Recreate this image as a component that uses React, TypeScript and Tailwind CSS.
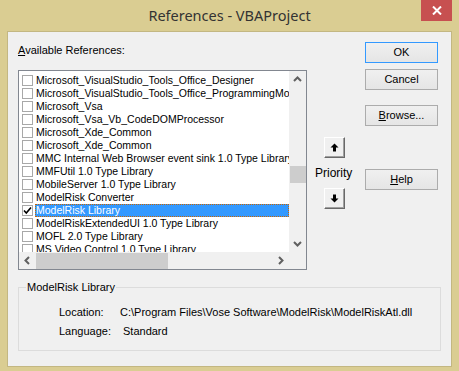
import React from 'react';

const rows: { name: string; checked?: boolean; selected?: boolean }[] = [
  { name: 'Microsoft_VisualStudio_Tools_Office_Designer' },
  { name: 'Microsoft_VisualStudio_Tools_Office_ProgrammingModel' },
  { name: 'Microsoft_Vsa' },
  { name: 'Microsoft_Vsa_Vb_CodeDOMProcessor' },
  { name: 'Microsoft_Xde_Common' },
  { name: 'Microsoft_Xde_Common' },
  { name: 'MMC Internal Web Browser event sink 1.0 Type Library' },
  { name: 'MMFUtil 1.0 Type Library' },
  { name: 'MobileServer 1.0 Type Library' },
  { name: 'ModelRisk Converter' },
  { name: 'ModelRisk Library', checked: true, selected: true },
  { name: 'ModelRiskExtendedUI 1.0 Type Library' },
  { name: 'MOFL 2.0 Type Library' },
  { name: 'MS Video Control 1.0 Type Library' },
];

function Chevron({ dir }: { dir: 'up' | 'down' | 'left' | 'right' }) {
  const d = {
    up: 'M1 6 L4.5 2.5 L8 6',
    down: 'M1 3 L4.5 6.5 L8 3',
    left: 'M6 1 L2.5 4.5 L6 8',
    right: 'M3 1 L6.5 4.5 L3 8',
  }[dir];
  return (
    <svg width="9" height="9" viewBox="0 0 9 9">
      <path d={d} fill="none" stroke="#606060" strokeWidth="2" />
    </svg>
  );
}

function PushButton({ children, primary }: { children: React.ReactNode; primary?: boolean }) {
  return (
    <button
      className={`w-[73px] h-[21px] flex items-center justify-center text-[11px] text-black bg-gradient-to-b from-[#f0f0f0] to-[#e5e5e5] border ${
        primary ? 'border-[#3399ff]' : 'border-[#acacac]'
      }`}
    >
      {children}
    </button>
  );
}

function ArrowButton({ down }: { down?: boolean }) {
  return (
    <button className="w-[21px] h-[21px] flex items-center justify-center bg-[#f0f0f0] border border-t-white border-l-white border-r-[#696969] border-b-[#696969] shadow-[inset_-1px_-1px_0_#a0a0a0]">
      <svg width="9" height="9" viewBox="0 0 9 9" className={down ? 'rotate-180' : ''}>
        <path d="M4.5 0.5 L8.5 4.5 L6 4.5 L6 8.5 L3 8.5 L3 4.5 L0.5 4.5 Z" fill="#000" />
      </svg>
    </button>
  );
}

export default function App() {
  return (
    <div
      className="w-[459px] h-[371px] bg-[#dacd92] flex flex-col"
      style={{ fontFamily: '"Liberation Sans", Arial, sans-serif' }}
    >
      {/* title bar */}
      <div className="h-[31px] flex items-start pl-[38px] pr-[7px]">
        <div
          className="flex-1 h-[31px] flex items-center justify-center text-[14.5px] text-[#333]"
          style={{ fontFamily: '"Noto Sans", "Open Sans", sans-serif' }}
        >
          References - VBAProject
        </div>
        <div className="w-[31px] h-[21px] bg-[#c75050] flex items-center justify-center">
          <svg width="10" height="9" viewBox="0 0 10 9">
            <path d="M1 0.5 L9 8.5 M9 0.5 L1 8.5" stroke="#fff" strokeWidth="2" />
          </svg>
        </div>
      </div>

      {/* client area */}
      <div className="mx-[7px] mb-[4px] flex-1 bg-[#f0f0f0] border border-[#c3b782] flex flex-col">
        <div className="flex pl-[10px]">
          {/* list column */}
          <div className="flex flex-col">
            <div className="pt-[11px] h-[38px] text-[11px] text-black leading-[14px]">
              <span className="underline">A</span>vailable References:
            </div>
            <div className="w-[289px] h-[200px] border border-[#828790] bg-[#f0f0f0] flex flex-col">
              <div className="flex h-[181px]">
                <div className="w-[270px] h-[181px] bg-white overflow-hidden pt-[3px] pl-[3px]">
                  {rows.map((r, i) => (
                    <div key={i} className="h-[13px] flex items-center whitespace-nowrap">
                      <div className="w-[11px] h-[11px] border border-[#a8a8a8] bg-white flex items-center justify-center shrink-0">
                        {r.checked && (
                          <svg width="9" height="9" viewBox="0 0 9 9">
                            <path d="M1 4.5 L3.3 7 L8 1.5" fill="none" stroke="#000" strokeWidth="1.6" />
                          </svg>
                        )}
                      </div>
                      <div
                        className={`ml-[2px] h-[13px] flex items-center text-[10.5px] leading-[13px] pl-[1px] ${
                          r.selected
                            ? 'bg-[#3399ff] text-white outline outline-1 outline-dotted outline-[#cc6600] -outline-offset-1 w-[254px]'
                            : 'text-black'
                        }`}
                      >
                        {r.name}
                      </div>
                    </div>
                  ))}
                </div>
                {/* vertical scrollbar */}
                <div className="w-[17px] h-[181px] flex flex-col items-center">
                  <div className="h-[17px] flex items-center justify-center">
                    <Chevron dir="up" />
                  </div>
                  <div className="h-[78px]" />
                  <div className="w-[16px] h-[17px] bg-[#cdcdcd]" />
                  <div className="flex-1" />
                  <div className="h-[17px] flex items-center justify-center">
                    <Chevron dir="down" />
                  </div>
                </div>
              </div>
              {/* horizontal scrollbar */}
              <div className="flex h-[17px]">
                <div className="w-[270px] flex items-center">
                  <div className="w-[17px] h-[17px] flex items-center justify-center">
                    <Chevron dir="left" />
                  </div>
                  <div className="w-[132px] h-[16px] bg-[#cdcdcd]" />
                  <div className="flex-1" />
                  <div className="w-[17px] h-[17px] flex items-center justify-center">
                    <Chevron dir="right" />
                  </div>
                </div>
              </div>
            </div>
          </div>

          {/* priority column */}
          <div className="w-[58px] flex flex-col pt-[105px]">
            <div className="pl-[17px]">
              <ArrowButton />
            </div>
            <div className="h-[30px] flex items-center pl-[8px] text-[12px] text-black">Priority</div>
            <div className="pl-[17px]">
              <ArrowButton down />
            </div>
          </div>

          {/* buttons column */}
          <div className="flex flex-col pt-[10px]">
            <PushButton primary>OK</PushButton>
            <div className="h-[6px]" />
            <PushButton>Cancel</PushButton>
            <div className="h-[15px]" />
            <PushButton>
              <span>
                <span className="underline">B</span>rowse...
              </span>
            </PushButton>
            <div className="h-[43px]" />
            <PushButton>
              <span>
                <span className="underline">H</span>elp
              </span>
            </PushButton>
          </div>
        </div>

        {/* group box */}
        <div className="ml-[10px] mt-[17px] w-[423px] h-[64px] border border-[#dcdcdc] flex flex-col">
          <div className="-mt-[8px] ml-[7px] px-[1px] bg-[#f0f0f0] self-start text-[11px] leading-[14px] text-black">
            ModelRisk Library
          </div>
          <div className="mt-[10px] pl-[40px] flex items-center h-[16px] text-[11px] text-black">
            <span className="w-[61px]">Location:</span>
            <span>C:\Program Files\Vose Software\ModelRisk\ModelRiskAtl.dll</span>
          </div>
          <div className="mt-[3px] pl-[40px] flex items-center h-[16px] text-[11px] text-black">
            <span className="w-[64px]">Language:</span>
            <span>Standard</span>
          </div>
        </div>
      </div>
    </div>
  );
}
